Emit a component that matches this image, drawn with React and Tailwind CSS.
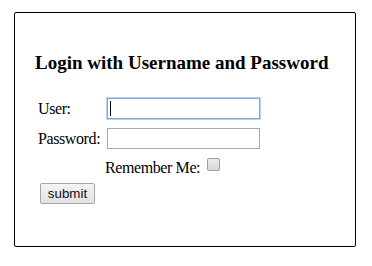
import React from 'react';

const serif = { fontFamily: '"Liberation Serif", "Times New Roman", serif' };

const LoginBox = () => {
  return (
    <div className="ml-[14px] mt-[12px] w-[342px] h-[235px] border border-black rounded-[2px] bg-white text-black" style={serif}>
      <div className="flex flex-col pl-[20px]">
        {/* Title */}
        <h3 className="mt-[39px] text-[19px] leading-[22px] font-bold">Login with Username and Password</h3>

        {/* User row */}
        <div className="mt-[24px] ml-[3px] flex items-center h-[21px]">
          <span className="w-[69px] text-[16px] leading-[18px] tracking-[-0.4px]">User:</span>
          <div className="relative w-[153px] h-[21px] border border-[#7ea6d8] ring-1 ring-[#b9d3f3] bg-white">
            <span className="absolute left-[2px] top-[2px] w-px h-[15px] bg-black" />
          </div>
        </div>

        {/* Password row */}
        <div className="mt-[9px] ml-[3px] flex items-center h-[21px]">
          <span className="w-[69px] text-[16px] leading-[18px] tracking-[-0.4px]">Password:</span>
          <div className="w-[153px] h-[21px] border border-[#a9a9a9] bg-white" />
        </div>

        {/* Remember me */}
        <div className="mt-[10px] ml-[70px] flex items-start">
          <span className="text-[16px] leading-[18px] tracking-[-0.4px]">Remember Me:</span>
          <span className="ml-[7px] -mt-[1px] w-[13px] h-[13px] rounded-[2px] border border-[#9c9c9c] bg-gradient-to-b from-[#ededed] to-[#d8d8d8]" />
        </div>

        {/* Submit */}
        <div className="mt-[6px] ml-[5px] flex">
          <button
            className="w-[55px] h-[21px] rounded-[2px] border border-[#a6a6a6] bg-gradient-to-b from-[#f4f4f4] to-[#e1e1e1] text-[13.33px] leading-[15px] text-[#111]"
            style={{ fontFamily: '"Liberation Sans", Arial, sans-serif' }}
          >
            submit
          </button>
        </div>
      </div>
    </div>
  );
};

export default function App() {
  return (
    <div className="w-[372px] h-[266px] bg-white overflow-hidden">
      <LoginBox />
    </div>
  );
}
